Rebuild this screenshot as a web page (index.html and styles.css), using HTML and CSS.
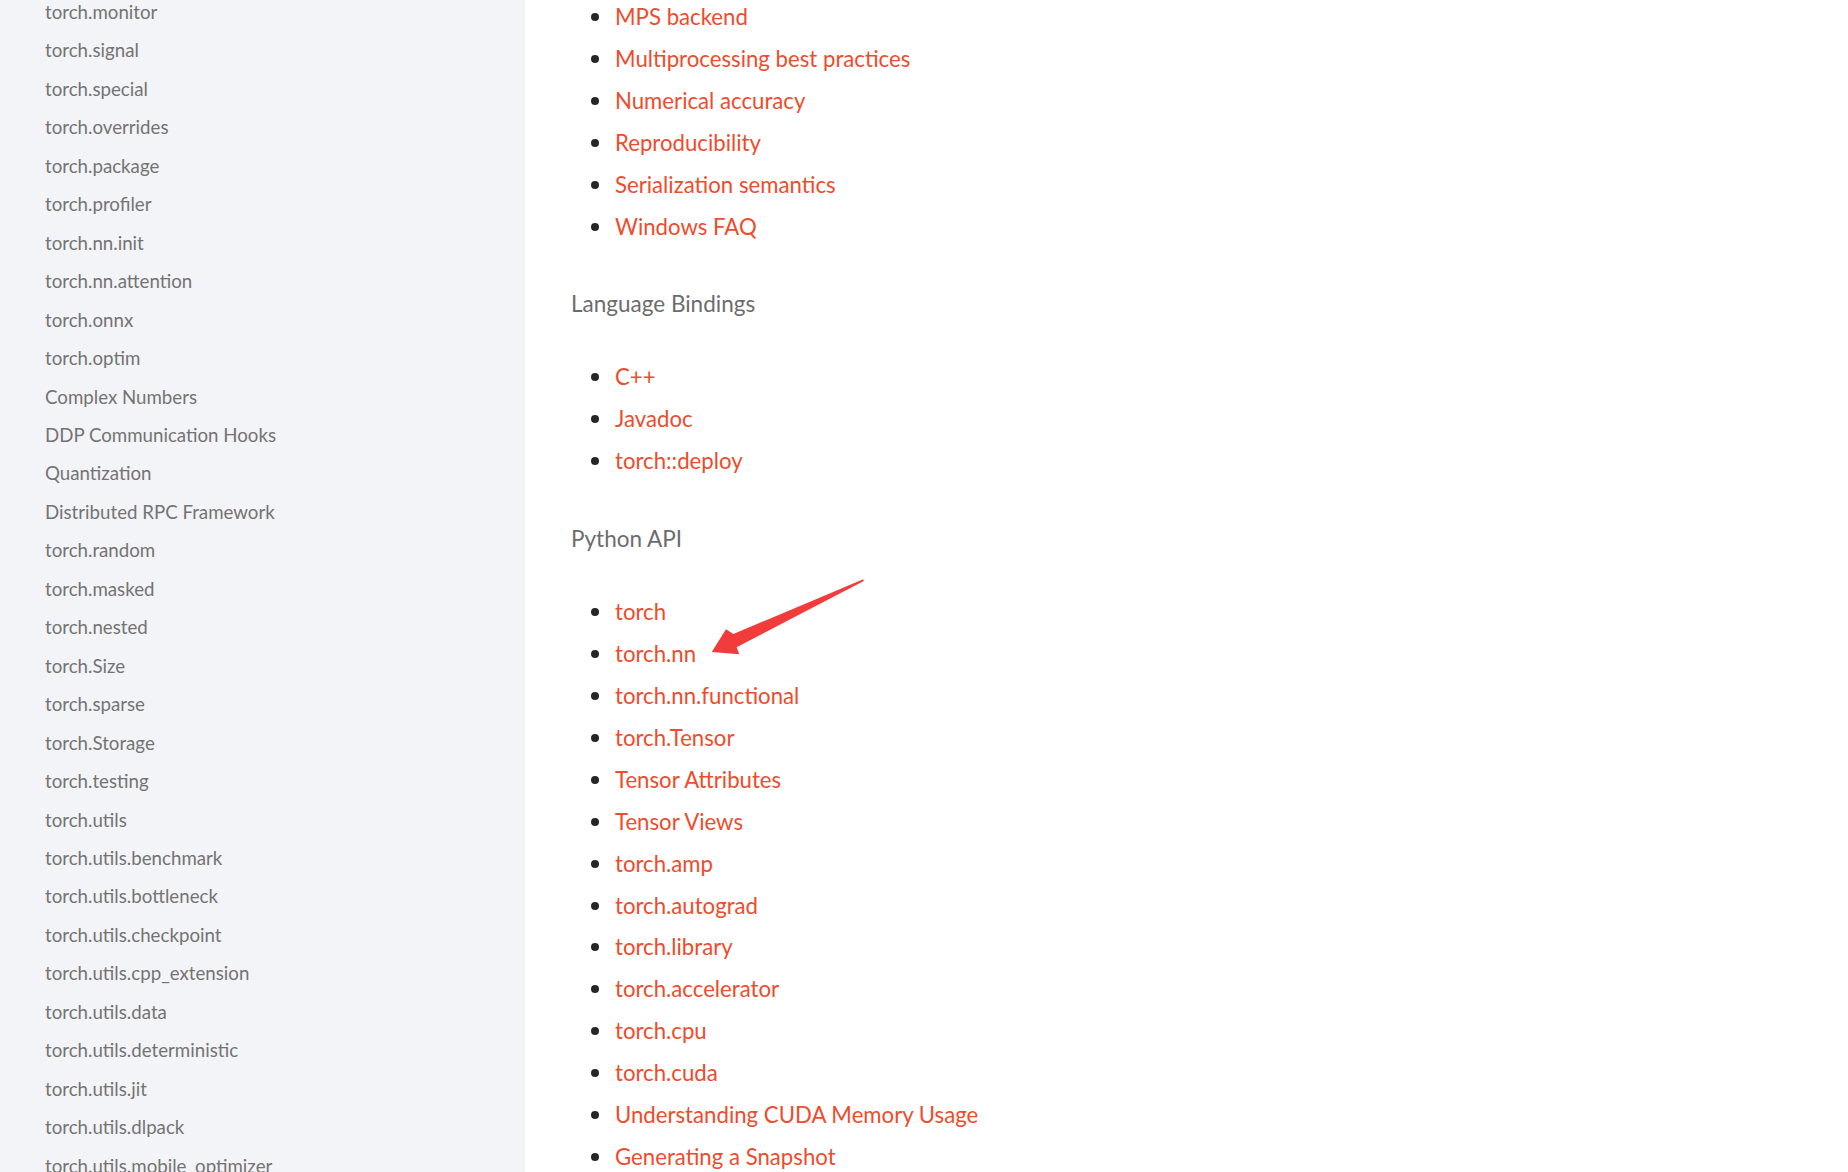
FILE: index.html
```html
<!DOCTYPE html>
<html lang="en">
<head>
    <meta charset="UTF-8">
    <title>PyTorch documentation</title>
    <link rel="stylesheet" href="styles.css">
</head>
<body>
<div class="side">
    <ul class="side-list">
        <li>torch.monitor</li>
        <li>torch.signal</li>
        <li>torch.special</li>
        <li>torch.overrides</li>
        <li>torch.package</li>
        <li>torch.profiler</li>
        <li>torch.nn.init</li>
        <li>torch.nn.attention</li>
        <li>torch.onnx</li>
        <li>torch.optim</li>
        <li>Complex Numbers</li>
        <li>DDP Communication Hooks</li>
        <li>Quantization</li>
        <li>Distributed RPC Framework</li>
        <li>torch.random</li>
        <li>torch.masked</li>
        <li>torch.nested</li>
        <li>torch.Size</li>
        <li>torch.sparse</li>
        <li>torch.Storage</li>
        <li>torch.testing</li>
        <li>torch.utils</li>
        <li>torch.utils.benchmark</li>
        <li>torch.utils.bottleneck</li>
        <li>torch.utils.checkpoint</li>
        <li>torch.utils.cpp_extension</li>
        <li>torch.utils.data</li>
        <li>torch.utils.deterministic</li>
        <li>torch.utils.jit</li>
        <li>torch.utils.dlpack</li>
        <li>torch.utils.mobile_optimizer</li>
    </ul>
</div>
<div class="main">
    <ul class="toc first">
        <li><a href="#">MPS backend</a></li>
        <li><a href="#">Multiprocessing best practices</a></li>
        <li><a href="#">Numerical accuracy</a></li>
        <li><a href="#">Reproducibility</a></li>
        <li><a href="#">Serialization semantics</a></li>
        <li><a href="#">Windows FAQ</a></li>
    </ul>
    <p class="caption">Language Bindings</p>
    <ul class="toc">
        <li><a href="#">C++</a></li>
        <li><a href="#">Javadoc</a></li>
        <li><a href="#">torch::deploy</a></li>
    </ul>
    <p class="caption">Python API</p>
    <ul class="toc">
        <li><a href="#">torch</a></li>
        <li><a href="#">torch.nn</a></li>
        <li><a href="#">torch.nn.functional</a></li>
        <li><a href="#">torch.Tensor</a></li>
        <li><a href="#">Tensor Attributes</a></li>
        <li><a href="#">Tensor Views</a></li>
        <li><a href="#">torch.amp</a></li>
        <li><a href="#">torch.autograd</a></li>
        <li><a href="#">torch.library</a></li>
        <li><a href="#">torch.accelerator</a></li>
        <li><a href="#">torch.cpu</a></li>
        <li><a href="#">torch.cuda</a></li>
        <li><a href="#">Understanding CUDA Memory Usage</a></li>
        <li><a href="#">Generating a Snapshot</a></li>
    </ul>
</div>
<!-- red arrow pointing at torch.nn -->
<svg class="mark" width="170" height="90" viewBox="0 0 170 90">
    <polygon points="163.3,9.3 33.3,64 26,59.3 11.7,82 39.3,84.3 36.7,77.3 163.8,11" fill="#f23c3c"/>
</svg>
</body>
</html>
```

FILE: styles.css
```css
html, body {
    margin: 0;
    height: 100%;
    overflow: hidden;
}

body {
    display: flex;
    font-family: Lato, "Noto Sans", sans-serif;
    background: #fff;
}

.side {
    width: 525px;
    flex: none;
    background: #f3f4f7;
    padding-left: 45px;
    box-sizing: border-box;
}

.side-list {
    list-style: none;
    margin: -7px 0 0;
    padding: 0;
    font-size: 18.7px;
    line-height: 38.45px;
    color: #737374;
}

.main {
    flex: 1;
    padding-left: 46px;
}

.toc {
    list-style: none;
    margin: 0;
    padding: 0 0 0 44px;
    font-size: 22.2px;
    line-height: 41.9px;
}

.toc.first {
    margin-top: -4px;
}

.toc li {
    position: relative;
}

.toc li::before {
    content: "";
    position: absolute;
    left: -24px;
    top: 17px;
    width: 8px;
    height: 8px;
    border-radius: 50%;
    background: #262626;
}

.toc a {
    color: #ee4c2c;
    text-decoration: none;
}

.caption {
    margin: 36px 0 31px;
    font-size: 22.5px;
    line-height: 42px;
    color: #6c6c6d;
}

.mark {
    position: absolute;
    left: 700px;
    top: 570px;
}
```
